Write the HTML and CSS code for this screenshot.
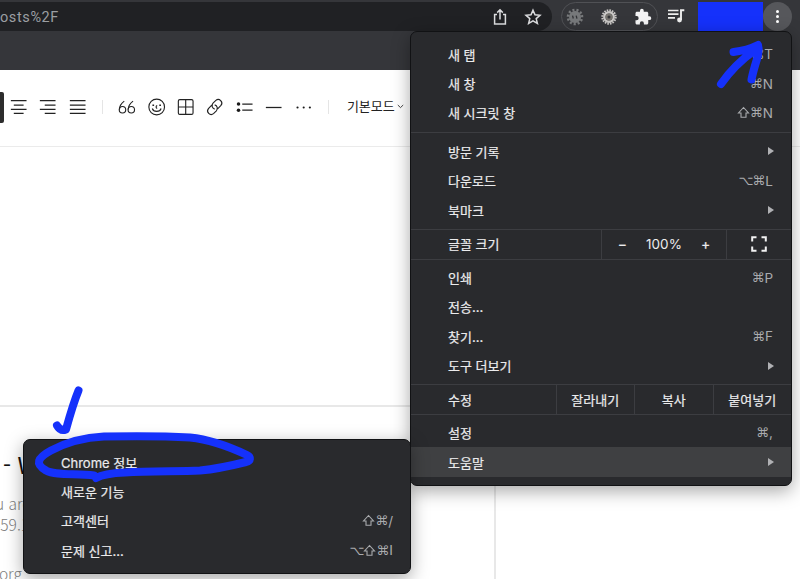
FILE: index.html
```html
<!DOCTYPE html>
<html lang="ko">
<head>
<meta charset="utf-8">
<title>Chrome 메뉴</title>
<link rel="stylesheet" href="styles.css">
</head>
<body>
<header class="browser">
  <div class="omnibox">
    <span class="url">osts%2F</span>
    <svg class="share" width="16" height="18" viewBox="0 0 16 18"><path d="M5 6.500H2.600V16h10.800V6.500H11M8 11.500V2M5.200 4.600 8 1.800l2.800 2.800"/></svg>
    <svg class="star" width="18" height="18" viewBox="0 0 18 18"><path d="m9 2.200 2 4.600 5 .5-3.800 3.300 1.200 4.900L9 12.900l-4.400 2.600 1.200-4.900L2 7.300l5-.5z"/></svg>
  </div>
  <div class="extensions">
    <svg width="18" height="18" viewBox="0 0 18 18"><g transform="rotate(-15 9 9)"><circle cx="9" cy="9" r="7" fill="none" stroke="#77797b" stroke-width="2.600" stroke-dasharray="2.100 1.900"/><circle cx="9" cy="9" r="6" fill="#77797b"/><path d="M7 7v3M10.500 8v3" stroke="#333438" stroke-width="1.300"/></g></svg>
    <svg width="18" height="18" viewBox="0 0 18 18"><circle cx="9" cy="9" r="6.600" fill="none" stroke="#c9c7c5" stroke-width="2.200" stroke-dasharray="1.600 1"/><circle cx="9" cy="9" r="4.700" fill="none" stroke="#c9c7c5" stroke-width="2.400"/><circle cx="9" cy="9" r="3.500" fill="#77746f"/><circle cx="9" cy="9" r="1.500" fill="#333438"/></svg>
    <svg width="18" height="18" viewBox="0 0 24 24"><path fill="#f4f4f5" d="M20.500 11H19V7c0-1.100-.9-2-2-2h-4V3.500a2.500 2.500 0 0 0-5 0V5H4c-1.100 0-2 .9-2 2v3.800h1.500a2.700 2.700 0 0 1 0 5.400H2V20c0 1.100.9 2 2 2h3.800v-1.500a2.700 2.700 0 0 1 5.400 0V22H17c1.100 0 2-.9 2-2v-4h1.500a2.500 2.500 0 0 0 0-5z"/></svg>
  </div>
  <svg class="media" width="18" height="16" viewBox="0 0 18 16"><path d="M1 2.500h10.500M1 6.200h10.500M1 9.900h7" stroke="#eee" stroke-width="1.700"/><path d="M14 12V2.200h3.300" fill="none" stroke="#eee" stroke-width="1.900"/><circle cx="12.500" cy="12" r="2.400" fill="#eee"/></svg>
  <div class="profile"></div>
  <div class="more"><i></i><i></i><i></i></div>
</header>
<main>
  <nav class="tools">
    <span class="selected"></span>
    <svg class="tool" viewBox="0 0 30 30"><path d="M7 8.500h16M10 13h10M7 17.500h16M10 21.500h10"/></svg>
    <svg class="tool" viewBox="0 0 30 30"><path d="M7 8.500h16M12 13h11M7 17.500h16M12 21.500h11"/></svg>
    <svg class="tool" viewBox="0 0 30 30"><path d="M7 8.500h16M7 13h16M7 17.500h16M7 21.500h16"/></svg>
    <span class="split"></span>
    <svg class="tool thin" viewBox="0 0 30 30"><path d="M12.500 9C9.800 11 7.600 14.500 7.600 17.500M21.500 9c-2.700 2-4.900 5.500-4.900 8.500"/><circle cx="10.700" cy="17.800" r="3.300"/><circle cx="19.700" cy="17.800" r="3.300"/></svg>
    <svg class="tool thin" viewBox="0 0 30 30"><circle cx="15" cy="15" r="8"/><path d="M10.500 16.500c1.300 4 7.700 4 9 0M15.500 13.500c-1.500.7-1.500 2.500 0 3"/><path d="M11.500 12.500v1.500M18.500 12.500v1.500" stroke-width="1.700"/></svg>
    <svg class="tool thin" viewBox="0 0 30 30"><rect x="7.500" y="7.500" width="15" height="15" rx="1.500"/><path d="M15 7.500v15M7.500 15h15"/></svg>
    <svg class="tool thin" viewBox="0 0 30 30"><path d="M13.200 12.700a3.900 3.900 0 0 0-1.700 1l-2.900 2.900a3.700 3.700 0 0 0 5.200 5.200l2.900-2.900a3.700 3.700 0 0 0-1.700-6.100M16.800 17.300a3.900 3.900 0 0 0 1.700-1l2.900-2.900a3.700 3.700 0 0 0-5.200-5.200l-2.900 2.900a3.700 3.700 0 0 0 1.700 6.100"/></svg>
    <svg class="tool" viewBox="0 0 30 30"><path d="M12.500 12H23M12.500 18.300H23"/><circle class="dot" cx="8.700" cy="12" r="1.800"/><circle class="dot" cx="8.700" cy="18.300" r="1.800"/></svg>
    <svg class="tool" viewBox="0 0 30 30"><path d="M7 15.500h16"/></svg>
    <svg class="tool" viewBox="0 0 30 30"><circle class="dot" cx="8.700" cy="15.500" r="1.100"/><circle class="dot" cx="15" cy="15.500" r="1.100"/><circle class="dot" cx="21.300" cy="15.500" r="1.100"/></svg>
    <span class="split"></span>
    <span class="mode">기본모드</span>
    <svg class="chevron" width="7" height="5" viewBox="0 0 7 5"><path d="M.8 1 3.500 3.600 6.200 1"/></svg>
  </nav>
  <section class="card">
    <h2>- W</h2>
    <p class="line1">u are</p>
    <p class="line2">459.1</p>
    <p class="line3">.org</p>
  </section>
</main>

<div class="menu main-menu">
  <div class="group">
    <div class="item">새 탭<kbd><b>⌘</b>T</kbd></div>
    <div class="item">새 창<kbd><b>⌘</b>N</kbd></div>
    <div class="item">새 시크릿 창<kbd><svg class="shift" viewBox="0 0 13 13"><path d="M6.500 1.500 1.500 7H4v4.200h5V7h2.500z"/></svg><b>⌘</b>N</kbd></div>
  </div>
  <div class="group">
    <div class="item">방문 기록<span class="arrow"></span></div>
    <div class="item">다운로드<kbd><b class="option">⌥</b><b>⌘</b>L</kbd></div>
    <div class="item">북마크<span class="arrow"></span></div>
  </div>
  <div class="controls zoom-row">
    <span class="label">글꼴 크기</span>
    <span class="zoom"><span>−</span><span class="percent">100%</span><span>+</span></span>
    <span class="full"><svg width="16" height="16" viewBox="0 0 16 16"><path d="M1.200 5.500V1.200h4.300M10.500 1.200h4.300v4.300M14.800 10.500v4.300h-4.300M5.500 14.800H1.200v-4.300"/></svg></span>
  </div>
  <div class="group">
    <div class="item">인쇄<kbd><b>⌘</b>P</kbd></div>
    <div class="item">전송...</div>
    <div class="item">찾기...<kbd><b>⌘</b>F</kbd></div>
    <div class="item">도구 더보기<span class="arrow"></span></div>
  </div>
  <div class="controls edit-row">
    <span class="label">수정</span><span class="edit">잘라내기</span><span class="edit">복사</span><span class="edit">붙여넣기</span>
  </div>
  <div class="group last">
    <div class="item">설정<kbd><b>⌘</b>,</kbd></div>
    <div class="item active">도움말<span class="arrow"></span></div>
  </div>
</div>

<div class="menu sub-menu">
  <div class="item">Chrome 정보</div>
  <div class="item">새로운 기능</div>
  <div class="item">고객센터<kbd><svg class="shift" viewBox="0 0 13 13"><path d="M6.500 1.500 1.500 7H4v4.200h5V7h2.500z"/></svg><b>⌘</b>/</kbd></div>
  <div class="item">문제 신고...<kbd><b class="option">⌥</b><svg class="shift" viewBox="0 0 13 13"><path d="M6.500 1.500 1.500 7H4v4.200h5V7h2.500z"/></svg><b>⌘</b>I</kbd></div>
</div>

<svg class="ink" width="800" height="579" viewBox="0 0 800 579">
  <path d="M721 84C730 71 741 60 755 50M733.500 52C742 51 750 49 758 45M758 45.500C759.500 50 758.500 54 757 59C754.500 67 753 72 751.500 79.500M752 52L757 54"/>
  <path d="M78.500 390.500C73 404 70 415 66 429.500C62 431 59 429 57 425.500"/>
  <path d="M96 478C103 474 113 473 125 472.500C150 471 178 471.500 200 470.500C216 469 232 465.500 246 462C251 461 251 457 247 455C230 447 211 439.500 190 437.500C165 436 130 436 104 436.500C83 437.500 65 443 51 450.500C37 458 35 464 46 470.500C56 476 77 473 94 475.500"/>
</svg>
</body>
</html>
```
FILE: styles.css
```css
* { box-sizing: border-box; }
body {
  margin: 0;
  width: 800px;
  height: 579px;
  overflow: hidden;
  position: relative;
  background: #fff;
  font-family: Inter, "Noto Sans CJK KR", sans-serif;
  font-size: 13px;
}
svg { display: block; flex: none; }

.browser {
  height: 70px;
  padding-top: 2px;
  background: #35363a;
  display: flex;
  align-items: flex-start;
}
.omnibox {
  width: 552px;
  height: 29px;
  padding-right: 10px;
  border-radius: 0 15px 15px 0;
  background: #202124;
  display: flex;
  align-items: center;
}
.url { flex: 1; padding-top: 1px; color: #9b9ea2; font-size: 14.500px; font-family: Roboto, sans-serif; letter-spacing: .6px; }
.omnibox path { fill: none; stroke: #dcdddf; stroke-width: 1.500; }
.share { margin-right: 16px; }
.extensions {
  width: 97px;
  height: 29px;
  margin-left: 9px;
  padding: 0 5px 0 4px;
  border: 1px solid #505155;
  border-radius: 15px;
  display: flex;
  align-items: center;
  justify-content: space-between;
}
.media { margin: 6px 0 0 9px; }
.profile { width: 65px; height: 36px; margin-left: 13px; background: #1531fb; }
.more {
  width: 29px;
  height: 29px;
  border-radius: 50%;
  background: #56575b;
  display: flex;
  flex-direction: column;
  align-items: center;
  justify-content: center;
  gap: 1.500px;
}
.more i { width: 3.500px; height: 3.500px; border-radius: 50%; background: #fff; }

.tools {
  height: 77px;
  padding-bottom: 2px;
  border-bottom: 1px solid #ebebeb;
  display: flex;
  align-items: center;
}
.selected { width: 4px; height: 31px; border-radius: 0 2px 2px 0; background: #2d2d2d; }
.tool { width: 29.400px; height: 30px; fill: none; stroke: #222; stroke-width: 1.300; }
.tool.thin { stroke-width: 1.150; }
.tool .dot { fill: #1a1a1a; stroke: none; }
.split { width: 1px; height: 14px; margin: 0 9px 0 10px; background: #e5e5e5; }
.split + .mode { margin-left: 9px; }
.mode { color: #222; margin-top: -3px; }
.chevron { margin: -2px 0 0 2px; fill: none; stroke: #444; stroke-width: 1; }

.card {
  width: 496px;
  height: 200px;
  margin-top: 258px;
  padding: 44px 0 0 3px;
  border: solid #e8e8e8;
  border-width: 2px 2px 0 0;
  color: #808080;
  font-family: "Noto Sans CJK KR", sans-serif;
}
.card h2 { margin: 0; font-size: 23px; line-height: 26px; font-weight: 400; color: #111; }
.card p { margin: 0 0 0 -8px; font-weight: 300; font-size: 15.500px; line-height: 21px; }
.card .line1 { margin-top: 16px; }
.card .line2 { margin-left: -11px; }
.card .line3 { margin-top: 28px; margin-left: -8px; }

.menu {
  position: absolute;
  background: #292a2d;
  color: #ececed;
  border: 1px solid #111214;
  border-radius: 7px;
  box-shadow: 0 5px 18px rgba(0,0,0,.35);
  -webkit-text-stroke: .2px;
}
.main-menu { left: 410px; top: 31px; width: 382px; height: 455px; }
.sub-menu { left: 23px; top: 439px; width: 388px; height: 135px; padding-top: 7.500px; }
.item {
  height: 29.400px;
  padding: 0 18px 0 37px;
  display: flex;
  align-items: center;
  justify-content: space-between;
}
.sub-menu .item { padding-right: 17px; }
.group { padding: 4px 0; }
.group:first-child { padding-top: 7.500px; }
.group + .group { border-top: 1px solid #3c3d41; }
.controls + .group { padding: 3px 0 3.600px; }
.active { background: #3f4042; }
kbd { font: 400 13.500px Inter, sans-serif; color: #a9abae; display: flex; align-items: center; -webkit-text-stroke: 0; }
kbd b { font: 400 13px "DejaVu Sans", sans-serif; }
kbd .option { margin-right: -1px; }
.shift { width: 13px; height: 13px; fill: none; stroke: #a9abae; stroke-width: 1.100; }
.arrow { border: solid transparent; border-width: 4px 0 4px 6px; border-left-color: #b0b1b4; margin-right: -1px; }

.controls {
  height: 31px;
  border: solid #3c3d41;
  border-width: 1px 0;
  display: flex;
  align-items: stretch;
}
.controls > span { display: flex; align-items: center; justify-content: center; padding-bottom: 1px; }
.controls > .label { flex: 1; justify-content: flex-start; padding-left: 37px; }
.controls > .zoom { width: 126px; border: solid #3c3d41; border-width: 0 1px; gap: 19px; }
.zoom > span { font-size: 14px; }
.zoom > .percent { font-size: 13.500px; -webkit-text-stroke: 0; }
.controls > .full { width: 64px; }
.full path { fill: none; stroke: #f2f2f2; stroke-width: 2; }
.controls > .edit { width: 78.500px; border-left: 1px solid #3c3d41; }

.ink {
  position: absolute;
  left: 0;
  top: 0;
  fill: none;
  stroke: #1531fb;
  stroke-width: 8;
  stroke-linecap: round;
  stroke-linejoin: round;
}
```
